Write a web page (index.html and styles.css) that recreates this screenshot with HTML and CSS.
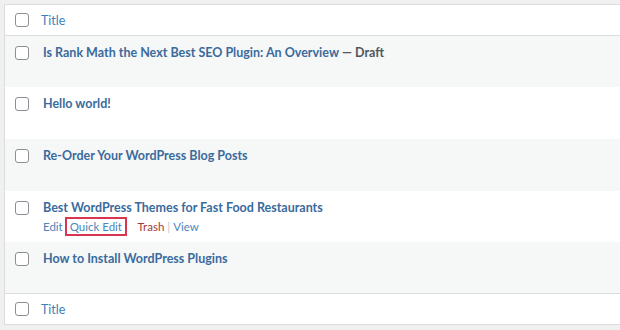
FILE: index.html
```html
<!DOCTYPE html>
<html lang="en">
<head>
  <meta charset="UTF-8">
  <title>Posts</title>
  <link rel="stylesheet" href="styles.css">
</head>
<body>

<div class="wrap">
  <table class="posts">
    <thead>
      <tr>
        <td class="check"><span class="box"></span></td>
        <th class="col-title"><a href="#">Title</a></th>
      </tr>
    </thead>
    <tbody>
      <tr class="alt">
        <td class="check"><span class="box"></span></td>
        <td class="col-title"><a class="row-title" href="#">Is Rank Math the Next Best SEO Plugin: An Overview</a> <span class="state">— Draft</span></td>
      </tr>
      <tr>
        <td class="check"><span class="box"></span></td>
        <td class="col-title"><a class="row-title" href="#">Hello world!</a></td>
      </tr>
      <tr class="alt">
        <td class="check"><span class="box"></span></td>
        <td class="col-title"><a class="row-title" href="#">Re-Order Your WordPress Blog Posts</a></td>
      </tr>
      <tr>
        <td class="check"><span class="box"></span></td>
        <td class="col-title">
          <a class="row-title" href="#">Best WordPress Themes for Fast Food Restaurants</a>
          <div class="row-actions">
            <a href="#">Edit</a>
            <a class="quick" href="#">Quick Edit</a>
            <a class="trash" href="#">Trash</a><span class="sep">|</span><a href="#">View</a>
          </div>
        </td>
      </tr>
      <tr class="alt">
        <td class="check"><span class="box"></span></td>
        <td class="col-title"><a class="row-title" href="#">How to Install WordPress Plugins</a></td>
      </tr>
    </tbody>
    <tfoot>
      <tr>
        <td class="check"><span class="box"></span></td>
        <th class="col-title"><a href="#">Title</a></th>
      </tr>
    </tfoot>
  </table>
</div>

</body>
</html>
```

FILE: styles.css
```css
body {
  margin: 0;
  background-color: #f0f0f1;
  font-family: Lato, "Open Sans", Arial, sans-serif;
  font-size: 12px;
  color: #50575e;
  overflow: hidden;
}

a {
  text-decoration: none;
}

.wrap {
  margin: 4px -4px 0 4px;
}

.posts {
  width: 100%;
  border-collapse: collapse;
  background-color: #fff;
  border: 1px solid #dcdcde;
}

.posts td, .posts th {
  padding: 0;
  text-align: left;
  vertical-align: top;
}

.check {
  width: 26px;
  padding-left: 10px !important;
}

.box {
  display: block;
  width: 12px;
  height: 12px;
  border: 1px solid #8c8f94;
  border-radius: 3px;
  background-color: #fff;
}

thead tr, tfoot tr {
  height: 31px;
}

thead td, thead th, tfoot td, tfoot th {
  vertical-align: middle !important;
}

thead tr {
  border-bottom: 1px solid #dcdcde;
}

tfoot tr {
  border-top: 1px solid #dcdcde;
}

th.col-title {
  font-weight: normal;
  font-size: 12.5px;
}

th.col-title a {
  color: #3f80b8;
}

tbody tr {
  height: 51.7px;
}

tbody .check {
  padding-top: 10px !important;
}

tbody .col-title {
  padding-top: 9px !important;
  padding-left: 2px !important;
}

tr.alt {
  background-color: #f6f7f7;
}

.row-title {
  color: #3a6b9d;
  font-weight: 700;
  font-size: 12.5px;
}

.state {
  color: #50575e;
  font-weight: 700;
  font-size: 12.5px;
}

.row-actions {
  margin-top: 2px;
  font-size: 11.5px;
  color: #c3c4c7;
}

.row-actions a {
  color: #4a86bb;
}

.row-actions .quick {
  display: inline-block;
  padding: 1px 3px;
  border: 2px solid #d93450;
  margin: 0 8px 0 -1px;
}

.row-actions .trash {
  color: #a63a36;
}

.sep {
  margin: 0 3px;
}
```
